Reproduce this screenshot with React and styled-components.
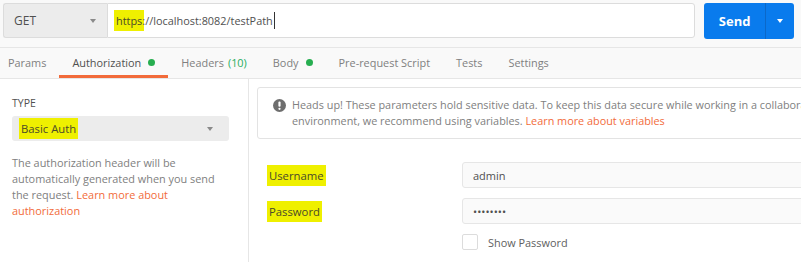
import React from "react";
import styled, { createGlobalStyle } from "styled-components";

const GlobalStyle = createGlobalStyle`
	html, body {
		margin: 0;
		background: #fff;
		overflow: hidden;
	}
	body {
		font-family: "Open Sans", "Noto Sans", sans-serif;
		font-size: 11px;
		color: #505050;
	}
`;

const tabs = [
	{ label: "Params" },
	{ label: "Authorization", dot: true, active: true },
	{ label: "Headers", count: 10 },
	{ label: "Body", dot: true },
	{ label: "Pre-request Script" },
	{ label: "Tests" },
	{ label: "Settings" },
];

const App = () => {
	return (
		<Page>
			<GlobalStyle />
			<TopBar>
				<MethodSelect>
					GET
					<Caret $color="#8a8a8a" />
				</MethodSelect>
				<UrlBox>
					<Mark>https</Mark>://localhost:8082/testPath
					<Cursor />
				</UrlBox>
				<SendGroup>
					<SendButton>Send</SendButton>
					<SendMenu>
						<Caret $color="#fff" />
					</SendMenu>
				</SendGroup>
			</TopBar>

			<TabBar>
				{tabs.map((tab) => (
					<Tab key={tab.label} $active={tab.active}>
						{tab.label}
						{tab.count && <Count>({tab.count})</Count>}
						{tab.dot && <Dot />}
					</Tab>
				))}
			</TabBar>

			<Body>
				<Sidebar>
					<SectionTitle>Type</SectionTitle>
					<TypeSelect>
						<Mark>Basic Auth</Mark>
						<Caret $color="#8a8a8a" />
					</TypeSelect>
					<Description>
						The authorization header will be
						<br />
						automatically generated when you send
						<br />
						the request. <Link>Learn more about authorization</Link>
					</Description>
				</Sidebar>

				<Main>
					<Notice>
						<NoticeIcon viewBox="0 0 13 13">
							<circle cx="6.5" cy="6.5" r="6.5" fill="#6e6e6e" />
							<rect x="5.4" y="2.6" width="2.2" height="5.2" rx="1" fill="#fff" />
							<circle cx="6.5" cy="9.8" r="1.15" fill="#fff" />
						</NoticeIcon>
						<NoticeText>
							Heads up! These parameters hold sensitive data. To keep this data
							secure while working in a collaborative
							<br />
							environment, we recommend using variables.{" "}
							<Link>Learn more about variables</Link>
						</NoticeText>
					</Notice>

					<Form>
						<FieldLabel>
							<Mark>Username</Mark>
						</FieldLabel>
						<Field readOnly value="admin" />
						<FieldLabel>
							<Mark>Password</Mark>
						</FieldLabel>
						<Field readOnly type="password" value="password" />
						<CheckRow>
							<CheckBox />
							Show Password
						</CheckRow>
					</Form>
				</Main>
			</Body>
		</Page>
	);
};

const Page = styled.div`
	width: 801px;
	height: 262px;
	overflow: hidden;
	display: flex;
	flex-direction: column;
`;

const Mark = styled.span`
	background: #eff000;
	padding: 3px 2px;
	margin: 0 -2px;
	color: #4a4a2a;
`;

const Caret = styled.span`
	width: 0;
	height: 0;
	border-left: 3.5px solid transparent;
	border-right: 3.5px solid transparent;
	border-top: 4px solid ${(p) => p.$color};
`;

const TopBar = styled.div`
	display: flex;
	align-items: flex-start;
	height: 48px;
	box-sizing: border-box;
	padding: 3px 7px 0 3px;
	background: #f9f9f9;
	border-bottom: 1px solid #e6e6e6;
`;

const MethodSelect = styled.div`
	flex: 0 0 104px;
	height: 35px;
	box-sizing: border-box;
	display: flex;
	align-items: center;
	justify-content: space-between;
	padding: 0 11px 0 10px;
	background: #ececec;
	border: 1px solid #dcdcdc;
	border-right: none;
	border-radius: 3px 0 0 3px;
	font-size: 12px;
	color: #505050;
`;

const UrlBox = styled.div`
	flex: 0 0 588px;
	height: 35px;
	box-sizing: border-box;
	display: flex;
	align-items: center;
	padding-left: 8px;
	background: #fff;
	border: 1px solid #dcdcdc;
	border-radius: 0 3px 3px 0;
	font-size: 10.9px;
	color: #505050;
	white-space: pre;
`;

const Cursor = styled.span`
	width: 1px;
	height: 17px;
	margin-left: 1px;
	background: #333;
`;

const SendGroup = styled.div`
	display: flex;
	margin-left: 9px;
	height: 36px;
	background: #097bed;
	border-radius: 3px;
	overflow: hidden;
`;

const SendButton = styled.div`
	width: 62px;
	display: flex;
	align-items: center;
	justify-content: center;
	color: #fff;
	font-weight: 700;
	font-size: 13px;
`;

const SendMenu = styled.div`
	width: 28px;
	display: flex;
	align-items: center;
	justify-content: center;
	border-left: 1px solid #0b68c9;
`;

const TabBar = styled.div`
	display: flex;
	height: 31px;
	box-sizing: border-box;
	background: #f9f9f9;
	border-bottom: 1px solid #e6e6e6;
`;

const Tab = styled.div`
	display: flex;
	align-items: center;
	gap: 5px;
	padding: 2px 13px 0;
	box-sizing: border-box;
	height: 30px;
	border-bottom: 3px solid ${(p) => (p.$active ? "#f26b3a" : "transparent")};
	color: ${(p) => (p.$active ? "#505050" : "#808080")};
	font-size: 10.9px;
	white-space: nowrap;

	&:first-child {
		padding-left: 8px;
	}
`;

const Count = styled.span`
	color: #27ae60;
	margin-left: -1px;
`;

const Dot = styled.span`
	width: 7px;
	height: 7px;
	border-radius: 50%;
	background: #27ae50;
	margin-left: 2px;
`;

const Body = styled.div`
	display: flex;
	flex: 1;
	background: #fff;
`;

const Sidebar = styled.div`
	flex: 0 0 248px;
	box-sizing: border-box;
	padding: 16px 19px 0 12px;
	border-right: 1px solid #e6e6e6;
`;

const SectionTitle = styled.div`
	text-transform: uppercase;
	font-size: 10.5px;
	line-height: 16px;
	color: #505050;
`;

const TypeSelect = styled.div`
	width: 217px;
	height: 25px;
	box-sizing: border-box;
	margin-top: 5px;
	display: flex;
	align-items: center;
	justify-content: space-between;
	padding: 0 16px 0 9px;
	background: #ececec;
	border-radius: 3px;
	font-size: 11.3px;
`;

const Description = styled.p`
	margin: 14px 0 0;
	font-size: 10.9px;
	line-height: 16px;
	color: #808080;
	white-space: nowrap;
`;

const Link = styled.span`
	color: #f26b3a;
	white-space: normal;
`;

const Main = styled.div`
	flex: 1;
	min-width: 0;
	padding: 8px 0 0 8px;
`;

const Notice = styled.div`
	display: flex;
	align-items: flex-start;
	gap: 6px;
	width: 1000px;
	box-sizing: border-box;
	padding: 9px 15px;
	border: 1px solid #e3e3e3;
	border-radius: 3px;
`;

const NoticeIcon = styled.svg`
	flex: 0 0 13px;
	width: 13px;
	height: 13px;
	margin-top: 2px;
`;

const NoticeText = styled.div`
	font-size: 10.85px;
	line-height: 16px;
	color: #808080;
	white-space: nowrap;
`;

const Form = styled.div`
	display: grid;
	grid-template-columns: 193px 400px;
	row-gap: 10px;
	align-items: center;
	margin-top: 23px;
	padding-left: 12px;
`;

const FieldLabel = styled.div`
	font-size: 11.3px;
	color: #505050;
`;

const Field = styled.input`
	height: 26px;
	box-sizing: border-box;
	padding: 0 10px;
	border: 1px solid #e6e6e6;
	border-radius: 3px;
	background: #fafafa;
	font-family: "Open Sans", "Noto Sans", sans-serif;
	font-size: 11px;
	color: #505050;
	outline: none;
`;

const CheckRow = styled.div`
	grid-column: 2;
	display: flex;
	align-items: center;
	gap: 10px;
	font-size: 10.9px;
	color: #606060;
`;

const CheckBox = styled.span`
	width: 16px;
	height: 16px;
	box-sizing: border-box;
	border: 1px solid #dcdcdc;
	border-radius: 2px;
	background: #fff;
`;

export default App;
